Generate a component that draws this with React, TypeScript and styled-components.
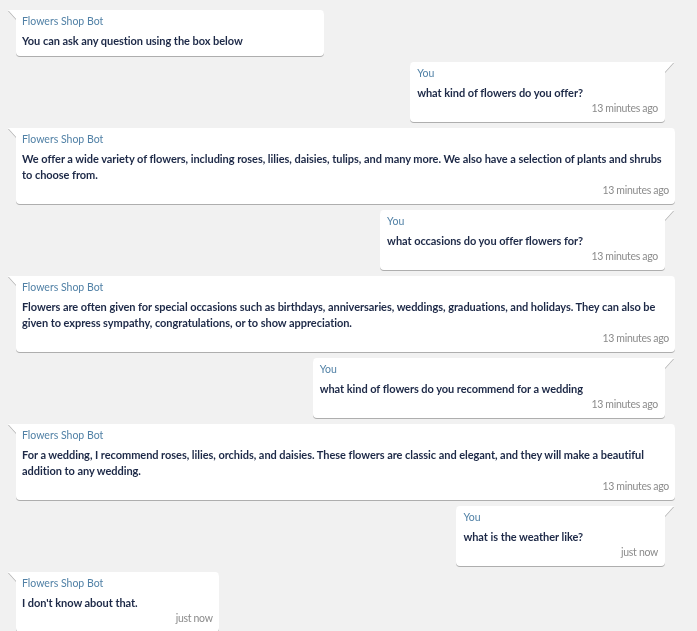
import styled, { createGlobalStyle } from "styled-components";

const GlobalStyle = createGlobalStyle`
  html, body {
    margin: 0;
    padding: 0;
    background: #f1f1f1;
  }
  body {
    font-family: "Lato", "Liberation Sans", sans-serif;
  }
`;

const ChatList = styled.div`
  display: flex;
  flex-direction: column;
  gap: 6px;
  padding: 10px 22px 0 16px;
  width: 697px;
  height: 631px;
  box-sizing: border-box;
  overflow: hidden;
`;

const Bubble = styled.div<{ $mine?: boolean }>`
  position: relative;
  align-self: ${(p) => (p.$mine ? "flex-end" : "flex-start")};
  margin-right: ${(p) => (p.$mine ? "10px" : "0")};
  max-width: ${(p) => (p.$mine ? "649px" : "659px")};
  box-sizing: border-box;
  background: #fff;
  padding: ${(p) => (p.$mine ? "4px 7px 7px 7px" : "4px 6px 7px 6px")};
  border-radius: ${(p) => (p.$mine ? "4px 0 4px 4px" : "0 4px 4px 4px")};
  filter: drop-shadow(0.5px 1.5px 0.6px rgba(0, 0, 0, 0.28));

  &::before {
    content: "";
    position: absolute;
    top: 0;
    width: 9px;
    height: 10px;
    background: #fff;
    ${(p) =>
      p.$mine
        ? `right: -9px; clip-path: polygon(0 0, 100% 0, 0 100%);`
        : `left: -8px; clip-path: polygon(0 0, 100% 0, 100% 100%);`}
  }
`;

const Sender = styled.div`
  font-size: 10.5px;
  line-height: 14px;
  color: #5181a6;
  margin-bottom: 5px;
`;

const Text = styled.div`
  font-size: 11px;
  line-height: 16px;
  font-weight: 700;
  color: #1d2947;
  letter-spacing: -0.05px;
`;

const Spacer = styled.span`
  display: inline-block;
  width: 75px;
`;

const Time = styled.div`
  font-size: 10.5px;
  line-height: 14px;
  color: #8b8b8b;
  text-align: right;
  letter-spacing: -0.3px;
`;

type Message = {
  mine?: boolean;
  text: string;
  time?: string;
};

const messages: Message[] = [
  { text: "You can ask any question using the box below" },
  { mine: true, text: "what kind of flowers do you offer?", time: "13 minutes ago" },
  {
    text:
      "We offer a wide variety of flowers, including roses, lilies, daisies, tulips, and many more. We also have a selection of plants and shrubs to choose from.",
    time: "13 minutes ago",
  },
  { mine: true, text: "what occasions do you offer flowers for?", time: "13 minutes ago" },
  {
    text:
      "Flowers are often given for special occasions such as birthdays, anniversaries, weddings, graduations, and holidays. They can also be given to express sympathy, congratulations, or to show appreciation.",
    time: "13 minutes ago",
  },
  { mine: true, text: "what kind of flowers do you recommend for a wedding", time: "13 minutes ago" },
  {
    text:
      "For a wedding, I recommend roses, lilies, orchids, and daisies. These flowers are classic and elegant, and they will make a beautiful addition to any wedding.",
    time: "13 minutes ago",
  },
  { mine: true, text: "what is the weather like?", time: "just now" },
  { text: "I don't know about that.", time: "just now" },
];

export default function App() {
  return (
    <>
      <GlobalStyle />
      <ChatList>
        {messages.map((m, i) => (
          <Bubble key={i} $mine={m.mine}>
            <Sender>{m.mine ? "You" : "Flowers Shop Bot"}</Sender>
            <Text>
              {m.text}
              <Spacer />
            </Text>
            {m.time && <Time>{m.time}</Time>}
          </Bubble>
        ))}
      </ChatList>
    </>
  );
}
